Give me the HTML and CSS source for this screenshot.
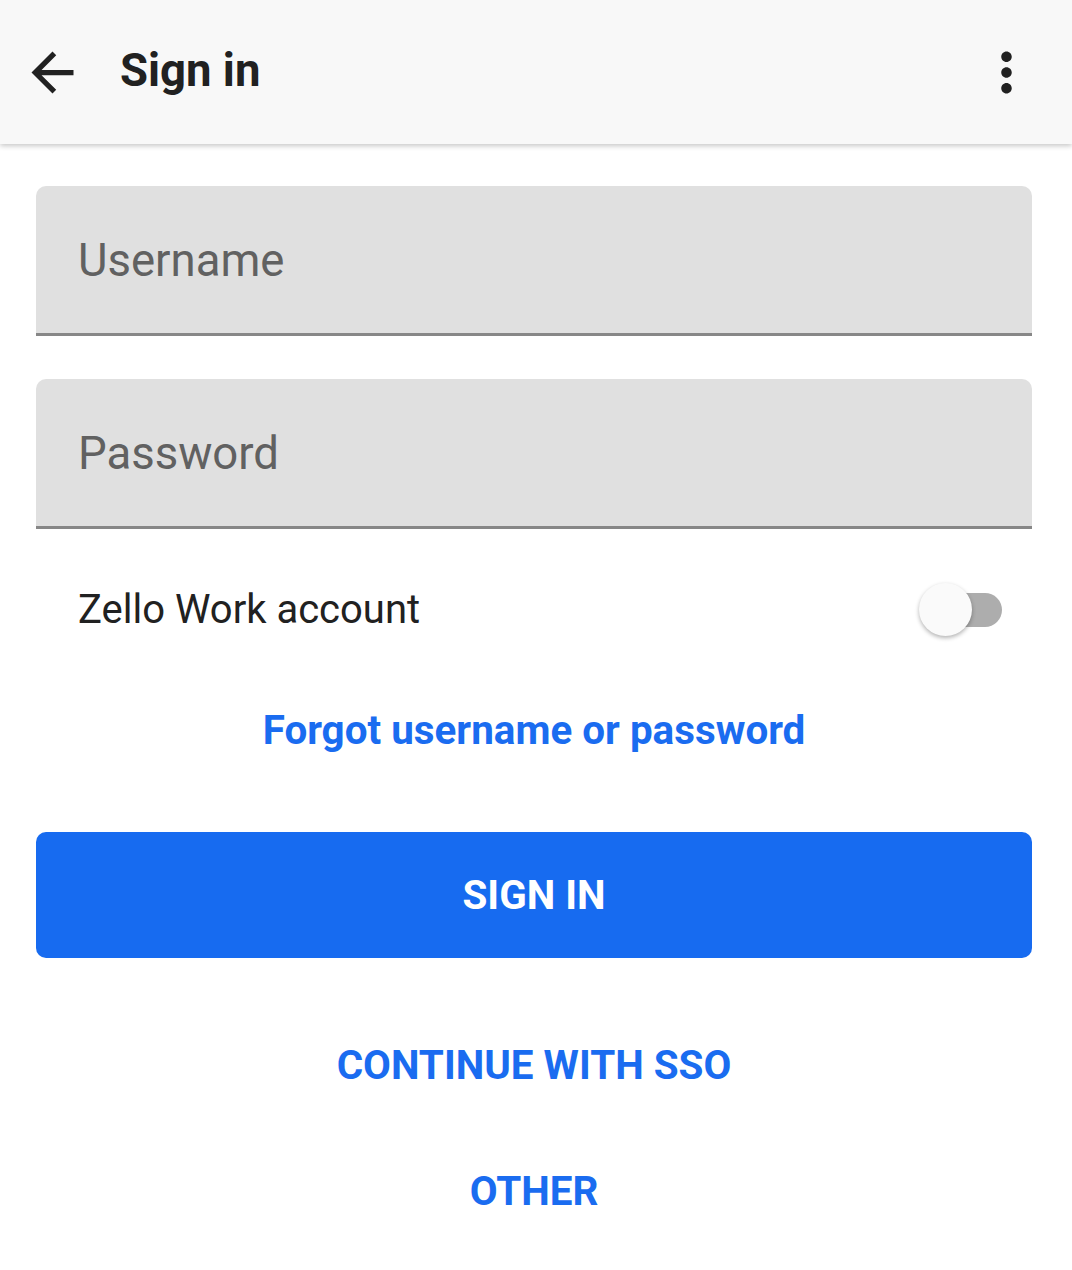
FILE: index.html
```html
<!DOCTYPE html>
<html>
<head>
<meta charset="utf-8">
<link rel="stylesheet" href="styles.css">
</head>
<body>
<header class="toolbar">
  <svg class="icon back" viewBox="0 0 24 24"><path d="M20 11H7.83l5.59-5.59L12 4l-8 8 8 8 1.41-1.41L7.83 13H20v-2z"/></svg>
  <h1 class="title">Sign in</h1>
  <svg class="icon more" viewBox="0 0 24 24"><path d="M12 8c1.1 0 2-.9 2-2s-.9-2-2-2-2 .9-2 2 .9 2 2 2zm0 2c-1.1 0-2 .9-2 2s.9 2 2 2 2-.9 2-2-.9-2-2-2zm0 6c-1.1 0-2 .9-2 2s.9 2 2 2 2-.9 2-2-.9-2-2-2z"/></svg>
</header>
<main class="content">
  <div class="field"><span class="label">Username</span></div>
  <div class="field second"><span class="label">Password</span></div>
  <div class="switch-row">
    <span class="switch-label">Zello Work account</span>
    <span class="switch"><span class="track"></span><span class="thumb"></span></span>
  </div>
  <div class="link-row"><span class="link">Forgot username or password</span></div>
  <div class="primary">SIGN IN</div>
  <div class="text-btn">CONTINUE WITH SSO</div>
  <div class="text-btn">OTHER</div>
</main>
</body>
</html>
```
FILE: styles.css
```css
html, body {
  margin: 0;
  padding: 0;
  background: #ffffff;
  font-family: Roboto, "Liberation Sans", sans-serif;
}
.toolbar {
  height: 144px;
  background: #f8f8f8;
  display: flex;
  align-items: center;
  box-shadow: 0 2px 5px rgba(0,0,0,0.22);
  position: relative;
  z-index: 1;
}
.icon {
  width: 63px;
  height: 63px;
  fill: #212121;
  flex: none;
}
.back {
  margin-left: 21px;
}
.title {
  margin: 0 0 0 36px;
  font-size: 45.5px;
  font-weight: 700;
  color: #212121;
  flex: 1;
  line-height: 1;
  padding-bottom: 2px;
}
.more {
  margin-right: 34px;
}
.content {
  padding: 42px 40px 0 36px;
  display: flex;
  flex-direction: column;
}
.field {
  height: 147px;
  background: #e0e0e0;
  border-bottom: 3px solid #878787;
  border-radius: 10px 10px 0 0;
  display: flex;
  align-items: center;
  padding-left: 42px;
}
.field.second {
  margin-top: 43px;
}
.label {
  font-size: 45.5px;
  color: #616161;
  padding-top: 2px;
}
.switch-row {
  height: 160px;
  display: flex;
  align-items: center;
  justify-content: space-between;
  padding-left: 42px;
  padding-right: 30px;
}
.switch-label {
  font-size: 40px;
  color: #212121;
}
.switch {
  position: relative;
  width: 83px;
  height: 53px;
  display: block;
}
.track {
  position: absolute;
  left: 12px;
  right: 0;
  top: 10px;
  height: 34px;
  border-radius: 17px;
  background: #adadad;
}
.thumb {
  position: absolute;
  left: 0;
  top: 0;
  width: 53px;
  height: 53px;
  border-radius: 50%;
  background: #fafafa;
  box-shadow: 0 2px 4px rgba(0,0,0,0.3);
}
.link-row {
  height: 82px;
  display: flex;
  align-items: center;
  justify-content: center;
}
.link {
  font-size: 40.4px;
  font-weight: 700;
  color: #1a6cf0;
}
.primary {
  margin-top: 61px;
  height: 126px;
  border-radius: 10px;
  background: #176bf0;
  color: #ffffff;
  font-size: 40.4px;
  font-weight: 700;
  display: flex;
  align-items: center;
  justify-content: center;
}
.text-btn {
  height: 126px;
  display: flex;
  align-items: center;
  justify-content: center;
  font-size: 40.4px;
  font-weight: 700;
  color: #1a6cf0;
}
.primary + .text-btn {
  margin-top: 44px;
}
```
